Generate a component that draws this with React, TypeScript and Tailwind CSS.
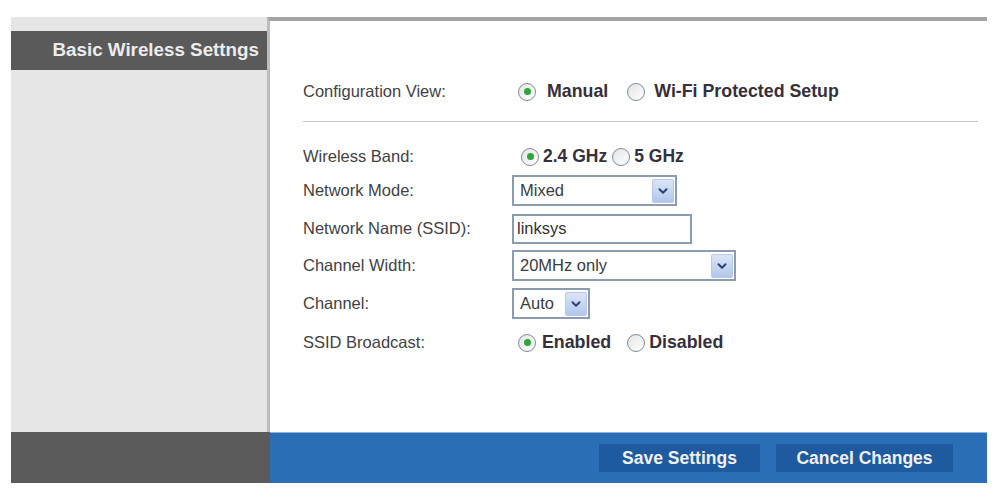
import { ChevronDown } from "lucide-react";

function Radio({ checked }: { checked?: boolean }) {
    return (
        <span className="flex h-[18px] w-[18px] shrink-0 items-center justify-center rounded-full border-[1.5px] border-[#7d8c9c] bg-gradient-to-br from-[#e4e4e4] to-white">
            {checked && <span className="h-[7px] w-[7px] rounded-full bg-[#2fa53a]" />}
        </span>
    );
}

function SelectBox({ value, width }: { value: string; width: string }) {
    return (
        <div className={`flex h-[31px] items-center justify-between border-2 border-[#8d9bae] bg-white pl-[6px] pr-[1px] ${width}`}>
            <span className="text-[16.5px] text-[#3c3c3c]">{value}</span>
            <span className="flex h-[24px] w-[22px] items-center justify-center rounded-[2px] border border-[#b9c9e4] bg-gradient-to-b from-[#dbe5f6] to-[#b3c7eb]">
                <ChevronDown className="h-[14px] w-[14px] text-[#2c4478]" strokeWidth={3.5} />
            </span>
        </div>
    );
}

function Row({ label, children, className = "" }: { label: string; children: React.ReactNode; className?: string }) {
    return (
        <div className={`flex h-[31px] items-center ${className}`}>
            <div className="w-[209px] shrink-0 text-[16.5px] text-[#424242]">{label}</div>
            {children}
        </div>
    );
}

export default function App() {
    return (
        <div className="min-h-[500px] w-[1000px] bg-white pl-[11px] pt-[17px] font-['Liberation_Sans',Arial,sans-serif]">
            <div className="w-[976px]">
                <div className="flex h-[415px]">
                    {/* Sidebar */}
                    <aside className="w-[256px] shrink-0 bg-[#e6e6e6] pt-[14px]">
                        <div className="flex h-[39px] items-center justify-end bg-[#5a5a5a] pr-[8px]">
                            <span className="text-[18.8px] font-bold text-[#ececec]">Basic Wireless Settngs</span>
                        </div>
                    </aside>

                    {/* Form */}
                    <main className="flex-1 border-l-[3px] border-t-4 border-l-[#bdbdbd] border-t-[#a3a3a3] bg-white pl-[33px] pr-[9px]">
                        <Row label="Configuration View:" className="mt-[55px]">
                            <div className="flex items-center pl-[6px]">
                                <Radio checked />
                                <span className="ml-[11px] text-[17.8px] font-bold text-[#35303a]">Manual</span>
                                <span className="ml-[19px]">
                                    <Radio />
                                </span>
                                <span className="ml-[9px] text-[17.8px] font-bold text-[#35303a]">Wi-Fi Protected Setup</span>
                            </div>
                        </Row>

                        <div className="mt-[14px] h-px bg-[#c9c9d6]" />

                        <Row label="Wireless Band:" className="mt-[19px]">
                            <div className="flex items-center pl-[9px]">
                                <Radio checked />
                                <span className="ml-[4px] text-[17.5px] font-bold text-[#35303a]">2.4 GHz</span>
                                <span className="ml-[5px]">
                                    <Radio />
                                </span>
                                <span className="ml-[4px] text-[17.5px] font-bold text-[#35303a]">5 GHz</span>
                            </div>
                        </Row>

                        <Row label="Network Mode:" className="mt-[3px]">
                            <SelectBox value="Mixed" width="w-[165px]" />
                        </Row>

                        <Row label="Network Name (SSID):" className="mt-[7px]">
                            <div className="flex h-[30px] w-[180px] items-center border-2 border-[#8d9bae] bg-white pl-[3px] text-[16.5px] text-[#333]">
                                linksys
                            </div>
                        </Row>

                        <Row label="Channel Width:" className="mt-[6px]">
                            <SelectBox value="20MHz only" width="w-[224px]" />
                        </Row>

                        <Row label="Channel:" className="mt-[7px]">
                            <SelectBox value="Auto" width="w-[78px]" />
                        </Row>

                        <Row label="SSID Broadcast:" className="mt-[8px]">
                            <div className="flex items-center pl-[6px]">
                                <Radio checked />
                                <span className="ml-[6px] text-[17.8px] font-bold text-[#35303a]">Enabled</span>
                                <span className="ml-[16px]">
                                    <Radio />
                                </span>
                                <span className="ml-[4px] text-[17.8px] font-bold text-[#35303a]">Disabled</span>
                            </div>
                        </Row>
                    </main>
                </div>

                {/* Footer */}
                <div className="flex h-[51px]">
                    <div className="w-[259px] shrink-0 bg-[#5b5b5b]" />
                    <div className="flex flex-1 items-center justify-end gap-[16px] border-t border-[#8bb5e2] bg-[#2a6eb6] pr-[34px]">
                        <button className="h-[28px] w-[161px] bg-[#1e5a9f] text-[17.5px] font-bold text-[#f0f0f0]">Save Settings</button>
                        <button className="h-[28px] w-[177px] bg-[#1e5a9f] text-[17.5px] font-bold text-[#f0f0f0]">Cancel Changes</button>
                    </div>
                </div>
            </div>
        </div>
    );
}
